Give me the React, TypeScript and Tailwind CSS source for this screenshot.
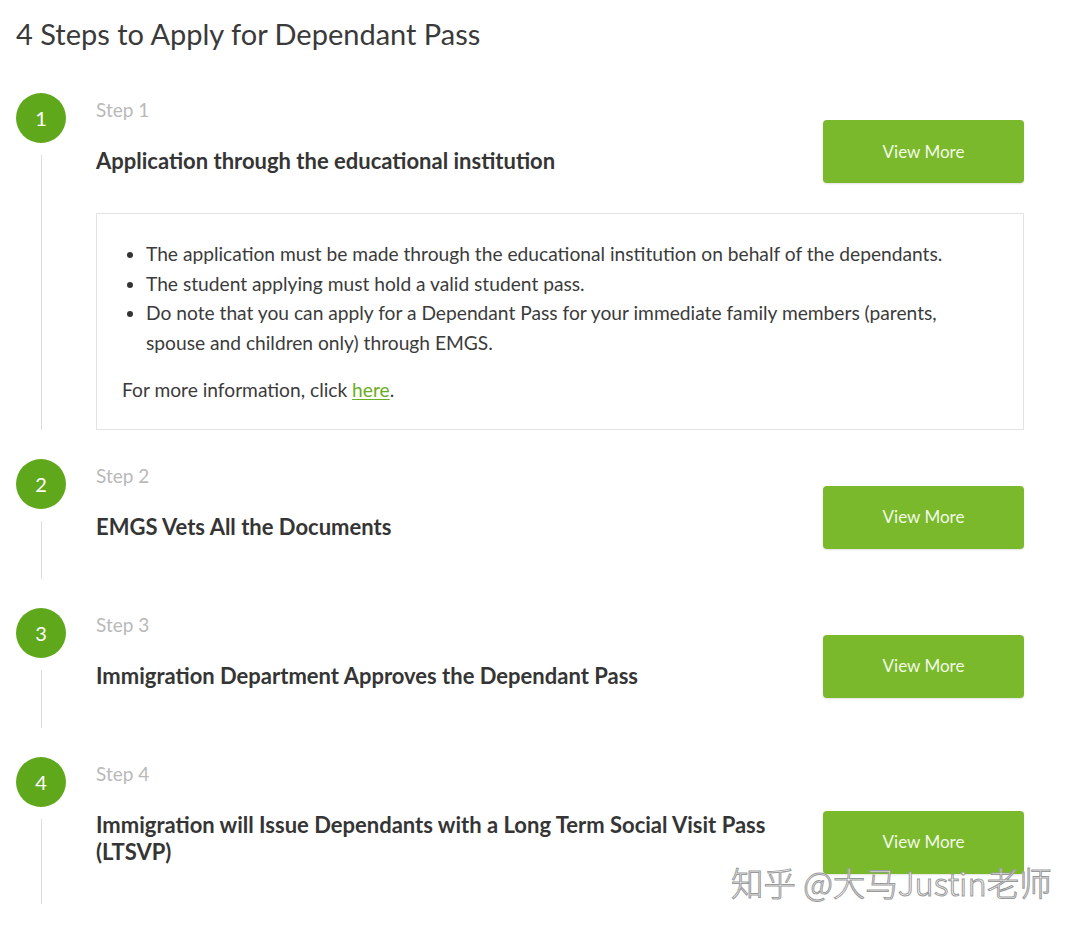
import React from 'react';

type Step = {
  n: number;
  title: React.ReactNode;
  details?: boolean;
};

const steps: Step[] = [
  { n: 1, title: 'Application through the educational institution', details: true },
  { n: 2, title: 'EMGS Vets All the Documents' },
  { n: 3, title: 'Immigration Department Approves the Dependant Pass' },
  {
    n: 4,
    title: (
      <>
        Immigration will Issue Dependants with a Long Term Social Visit Pass
        <br />
        (LTSVP)
      </>
    ),
  },
];

function Details() {
  return (
    <div className="border border-[#e3e3e3] pt-[25px] pb-[24px] pl-[25px] pr-4 text-[19.2px] leading-[29.5px] text-[#3b3b3b]">
      <ul className="list-disc pl-[24px] marker:text-[#333]">
        <li>The application must be made through the educational institution on behalf of the dependants.</li>
        <li>The student applying must hold a valid student pass.</li>
        <li>
          Do note that you can apply for a Dependant Pass for your immediate family members (parents,
          <br />
          spouse and children only) through EMGS.
        </li>
      </ul>
      <p className="mt-[18px]">
        For more information, click{' '}
        <a href="#" className="text-[#69ad24] underline underline-offset-2">
          here
        </a>
        .
      </p>
    </div>
  );
}

function StepRow({ step }: { step: Step }) {
  return (
    <div className="flex">
      {/* marker column */}
      <div className="flex w-[50px] shrink-0 flex-col items-center">
        <div className="flex h-[50px] w-[50px] items-center justify-center rounded-full bg-[#5fa81b] text-[20px] text-white">
          {step.n}
        </div>
        <div className="mt-[12px] w-px flex-1 bg-[#dcdcdc]" />
      </div>

      <div className="ml-[30px] flex-1">
        <div className="mb-[30px] flex items-end justify-between">
          <div className="pb-[9px]">
            <div className="mt-[5px] text-[19px] leading-[24px] text-[#b9b9b9]">Step {step.n}</div>
            <h2 className="mt-[25px] text-[22px] font-bold leading-[27px] text-[#353535]">{step.title}</h2>
          </div>
          <button className="h-[63px] w-[201px] shrink-0 rounded-[4px] bg-[#79b92b] text-[17px] text-[#f3fae6] shadow-[0_1px_2px_rgba(0,0,0,0.12)]">
            View More
          </button>
        </div>
        {step.details && <Details />}
      </div>
    </div>
  );
}

export default function App() {
  return (
    <div className="relative min-h-[929px] bg-white font-['Lato','Liberation_Sans',sans-serif]">
      <div className="w-[1024px] pl-[16px] pt-[16px]">
        <h1 className="text-[29px] leading-[35px] text-[#3a3a3a]">4 Steps to Apply for Dependant Pass</h1>
        <div className="mt-[42px] flex flex-col gap-[29px]">
          {steps.map((s) => (
            <StepRow key={s.n} step={s} />
          ))}
        </div>
      </div>

      {/* watermark */}
      <div className="pointer-events-none absolute left-[731px] top-[862px] font-['Noto_Sans_CJK_SC',sans-serif] text-[32.5px] font-light leading-[40px] text-white [-webkit-text-stroke:1px_#9a9a9a]">
        知乎 @大马Justin老师
      </div>
    </div>
  );
}
